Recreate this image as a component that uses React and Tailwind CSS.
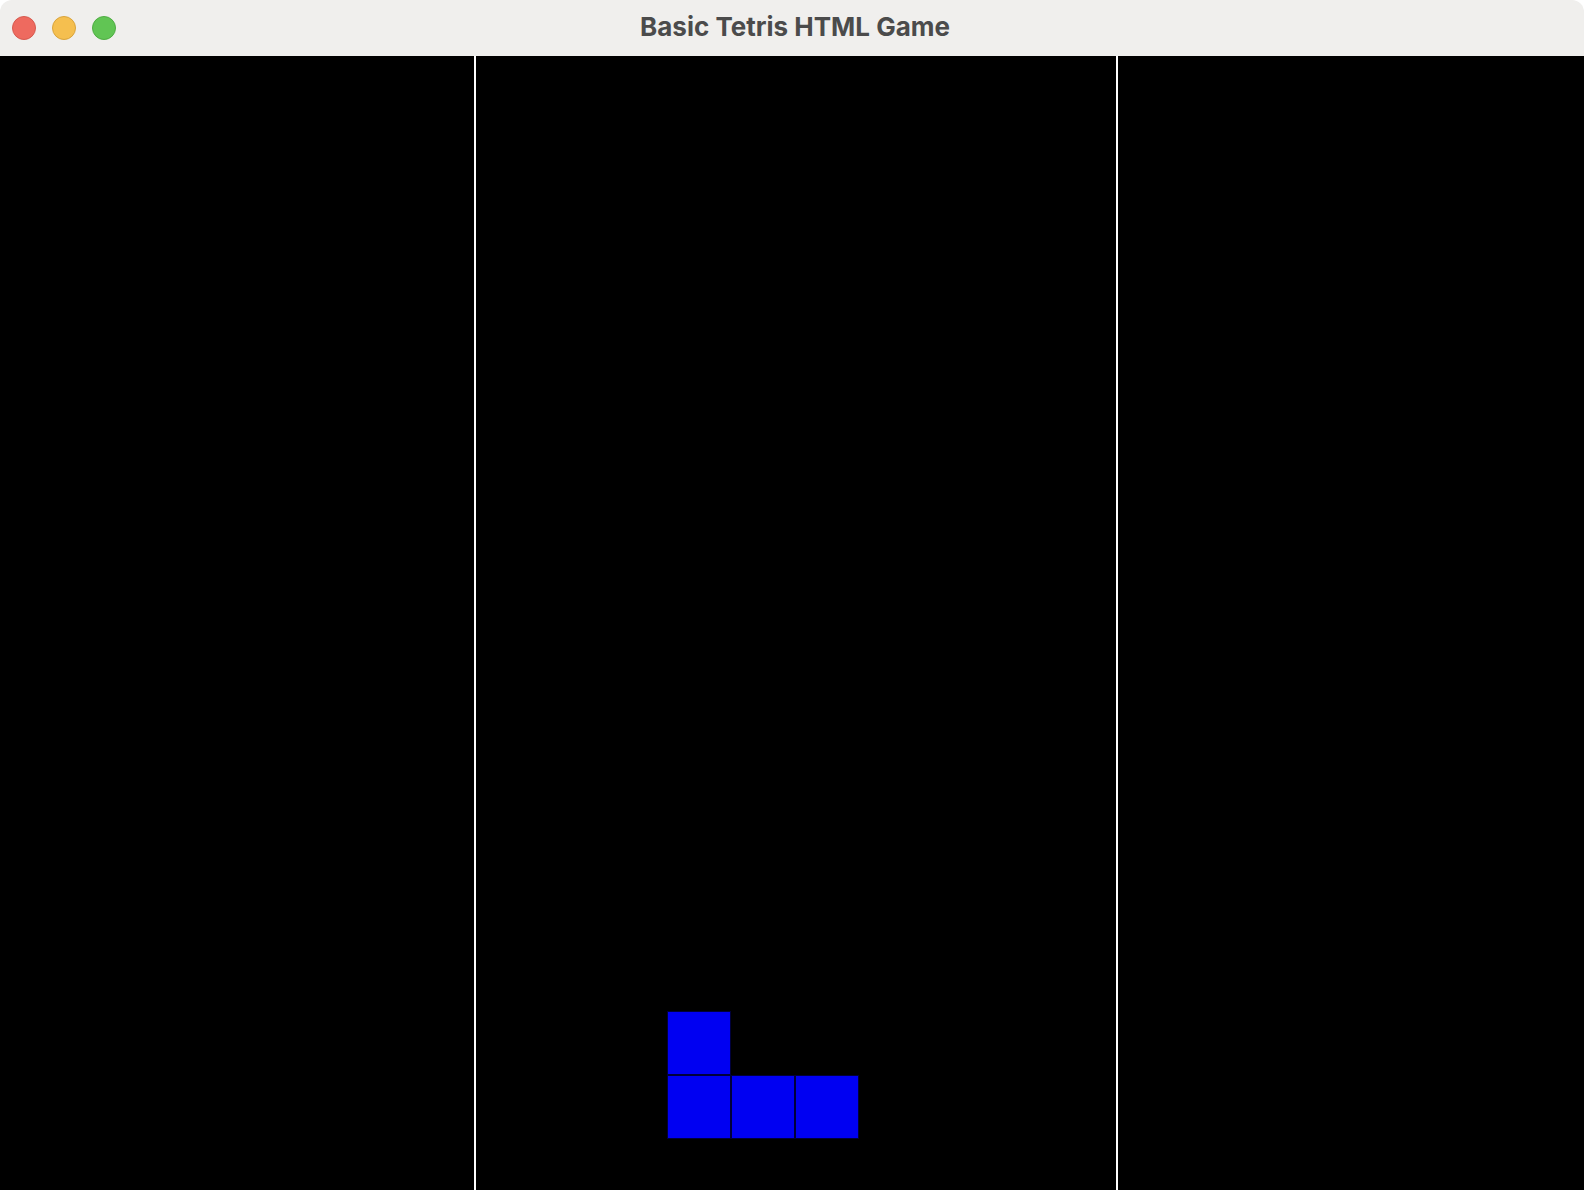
const cells = [
  { x: 0, y: 0 },
  { x: 0, y: 1 },
  { x: 1, y: 1 },
  { x: 2, y: 1 },
];

function Block({ x, y }) {
  // each cell is 64px, blue fill with a thin dark edge
  const left = 191 + x * 64;
  const top = 955 + y * 64;
  return (
    <div
      className="absolute w-[64px] h-[64px] bg-[#0000f2] border border-[#00003a]"
      style={{ left, top }}
    ></div>
  );
}

export default function App() {
  return (
    <div className="w-[1584px] h-[1190px] bg-white overflow-hidden">
      <div className="w-full h-full rounded-t-[12px] overflow-hidden flex flex-col">
        <div className="relative h-[56px] shrink-0 bg-[#f0efed] flex items-center justify-center">
          <div className="absolute left-[12px] top-[16px] flex flex-row gap-[16px]">
            <div className="w-[24px] h-[24px] rounded-full bg-[#ee6a5f] border border-[#d65a4f]"></div>
            <div className="w-[24px] h-[24px] rounded-full bg-[#f5bf4f] border border-[#d9a43c]"></div>
            <div className="w-[24px] h-[24px] rounded-full bg-[#61c554] border border-[#4fad43]"></div>
          </div>
          <div
            className="text-[26px] font-bold text-[#4b4b4b] leading-none pl-[6px] pb-[2px]"
            style={{ fontFamily: "Inter, 'Liberation Sans', sans-serif" }}
          >
            Basic Tetris HTML Game
          </div>
        </div>
        <div className="flex-1 bg-black flex flex-row">
          <div className="w-[474px] shrink-0"></div>
          <div className="relative w-[644px] shrink-0 border-x-2 border-white">
            {cells.map((c, i) => (
              <Block key={i} x={c.x} y={c.y} />
            ))}
          </div>
          <div className="flex-1"></div>
        </div>
      </div>
    </div>
  );
}
